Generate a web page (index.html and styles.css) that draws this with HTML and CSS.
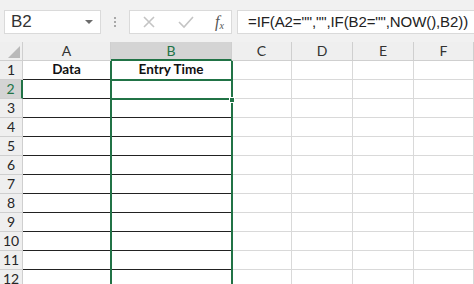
FILE: index.html
```html
<!DOCTYPE html>
<html>
<head>
<meta charset="utf-8">
<link rel="stylesheet" href="styles.css">
</head>
<body>
<div class="app">
  <div class="toolbar">
    <div class="namebox">
      <span class="name">B2</span>
      <svg class="caret" width="8" height="5" viewBox="0 0 8 5"><path d="M0 0 L8 0 L4 4 Z" fill="#6b6b6b"/></svg>
    </div>
    <div class="grip"><span></span><span></span><span></span></div>
    <div class="fxbox">
      <svg width="14" height="14" viewBox="0 0 14 14"><path d="M2 2 L12 12 M12 2 L2 12" stroke="#c4c4c4" stroke-width="1.6" fill="none"/></svg>
      <svg width="16" height="14" viewBox="0 0 16 14"><path d="M1 7 L6 12 L15 2" stroke="#c4c4c4" stroke-width="1.6" fill="none"/></svg>
      <span class="fx"><i>f</i><sub>x</sub></span>
    </div>
    <div class="formula">=IF(A2="","",IF(B2="",NOW(),B2))</div>
  </div>
  <div class="sheet">
    <div class="row head">
      <div class="cell corner"><svg width="12" height="12" viewBox="0 0 12 12"><path d="M12 0 L12 12 L0 12 Z" fill="#b9b9b9"/></svg></div>
      <div class="cell colh a">A</div>
      <div class="cell colh b sel">B</div>
      <div class="cell colh c">C</div>
      <div class="cell colh d">D</div>
      <div class="cell colh e">E</div>
      <div class="cell colh f">F</div>
    </div>
    <div class="row">
      <div class="cell rowh">1</div>
      <div class="cell a tb bold">Data</div>
      <div class="cell b tb bold">Entry Time</div>
      <div class="cell c"></div><div class="cell d"></div><div class="cell e"></div><div class="cell f"></div>
    </div>
    <div class="row">
      <div class="cell rowh selrow">2</div>
      <div class="cell a tb"></div><div class="cell b tb"></div>
      <div class="cell c"></div><div class="cell d"></div><div class="cell e"></div><div class="cell f"></div>
    </div>
    <div class="row">
      <div class="cell rowh">3</div>
      <div class="cell a tb"></div><div class="cell b tb"></div>
      <div class="cell c"></div><div class="cell d"></div><div class="cell e"></div><div class="cell f"></div>
    </div>
    <div class="row">
      <div class="cell rowh">4</div>
      <div class="cell a tb"></div><div class="cell b tb"></div>
      <div class="cell c"></div><div class="cell d"></div><div class="cell e"></div><div class="cell f"></div>
    </div>
    <div class="row">
      <div class="cell rowh">5</div>
      <div class="cell a tb"></div><div class="cell b tb"></div>
      <div class="cell c"></div><div class="cell d"></div><div class="cell e"></div><div class="cell f"></div>
    </div>
    <div class="row">
      <div class="cell rowh">6</div>
      <div class="cell a tb"></div><div class="cell b tb"></div>
      <div class="cell c"></div><div class="cell d"></div><div class="cell e"></div><div class="cell f"></div>
    </div>
    <div class="row">
      <div class="cell rowh">7</div>
      <div class="cell a tb"></div><div class="cell b tb"></div>
      <div class="cell c"></div><div class="cell d"></div><div class="cell e"></div><div class="cell f"></div>
    </div>
    <div class="row">
      <div class="cell rowh">8</div>
      <div class="cell a tb"></div><div class="cell b tb"></div>
      <div class="cell c"></div><div class="cell d"></div><div class="cell e"></div><div class="cell f"></div>
    </div>
    <div class="row">
      <div class="cell rowh">9</div>
      <div class="cell a tb"></div><div class="cell b tb"></div>
      <div class="cell c"></div><div class="cell d"></div><div class="cell e"></div><div class="cell f"></div>
    </div>
    <div class="row">
      <div class="cell rowh">10</div>
      <div class="cell a tb"></div><div class="cell b tb"></div>
      <div class="cell c"></div><div class="cell d"></div><div class="cell e"></div><div class="cell f"></div>
    </div>
    <div class="row">
      <div class="cell rowh">11</div>
      <div class="cell a tb"></div><div class="cell b tb"></div>
      <div class="cell c"></div><div class="cell d"></div><div class="cell e"></div><div class="cell f"></div>
    </div>
    <div class="row">
      <div class="cell rowh">12</div>
      <div class="cell a tb"></div><div class="cell b tb"></div>
      <div class="cell c"></div><div class="cell d"></div><div class="cell e"></div><div class="cell f"></div>
    </div>
    <div class="colsel"></div>
    <div class="active"></div>
    <div class="handle"></div>
  </div>
</div>
</body>
</html>
```
FILE: styles.css
```css
* { box-sizing: border-box; }
html, body { margin: 0; padding: 0; background: #ffffff; overflow: hidden; }
.app { width: 474px; height: 284px; overflow: hidden; font-family: "Lato", "Open Sans", sans-serif; }

.toolbar {
  height: 42px;
  background: #f1f1f1;
  display: flex;
  align-items: flex-start;
  padding-top: 10px;
  padding-left: 4px;
}
.namebox {
  width: 97px; height: 24px;
  background: #fff; border: 1px solid #dadada;
  display: flex; align-items: center; justify-content: space-between;
  padding: 0 7px 0 6px;
}
.name { font-family: "Liberation Sans", sans-serif; font-size: 17px; color: #333; }
.caret { margin-top: 1px; }
.grip { width: 28px; height: 24px; display: flex; flex-direction: column; align-items: center; justify-content: center; gap: 2px; }
.grip span { width: 2px; height: 2px; background: #a8a8a8; display: block; }
.fxbox {
  width: 103px; height: 24px;
  background: #fff; border: 1px solid #dadada;
  display: flex; align-items: center; justify-content: space-between;
  padding: 0 7px 0 12px;
}
.fx { font-family: "Liberation Serif", serif; font-size: 16px; color: #555; line-height: 1; }
.fx i { font-style: italic; }
.fx sub { font-size: 10px; font-style: italic; vertical-align: -2px; }
.formula {
  margin-left: 5px; flex: 1; height: 24px;
  background: #fff; border: 1px solid #dadada; border-right: none;
  font-family: "Liberation Sans", sans-serif; font-size: 15px; letter-spacing: -0.1px; color: #222;
  padding-left: 10px; line-height: 22px; white-space: nowrap; overflow: hidden;
}

.sheet { position: relative; }
.row { display: grid; grid-template-columns: 23px 88px 121px 60px 61px 61px 60px; height: 19px; }
.row.head { height: 19px; }
.cell {
  border-right: 1px solid #d9d9d9;
  border-bottom: 1px solid #d9d9d9;
  font-size: 14px; color: #222;
  display: flex; align-items: center; justify-content: center;
  line-height: 1;
}
.corner { background: #efefef; border-color: #cfcfcf; align-items: flex-end; justify-content: flex-end; padding: 0 2px 2px 0; }
.colh { background: #efefef; border-color: #cfcfcf; color: #333; }
.colh.sel { background: #d4d4d4; color: #217346; border-bottom: 2px solid #217346; }
.rowh { background: #efefef; border-color: #cfcfcf; color: #262626; }
.rowh.selrow { background: #d4d4d4; color: #217346; border-right: 2px solid #217346; }
.tb { border-bottom: 1px solid #222; border-right: 1px solid #222; }
.bold { font-weight: 700; color: #111; font-size: 13.5px; }

.colsel {
  position: absolute; left: 110px; top: 19px; width: 123px; bottom: -30px;
  border-left: 2px solid #217346; border-right: 2px solid #217346;
  pointer-events: none;
}
.active {
  position: absolute; left: 110px; top: 37px; width: 123px; height: 21px;
  border: 2px solid #217346;
}
.handle {
  position: absolute; left: 229px; top: 55px; width: 6px; height: 6px;
  background: #217346; border: 1px solid #fff;
}
```
